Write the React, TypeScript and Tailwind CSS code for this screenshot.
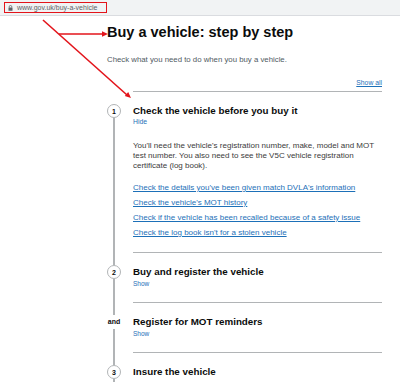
import React from "react";

const Circle = ({ n }: { n: string }) => (
  <div className="w-[14px] h-[14px] shrink-0 rounded-full border-[1.5px] border-[#b1b4b6] bg-white flex items-center justify-center text-[7px] font-bold leading-none text-[#0b0c0c]">
    {n}
  </div>
);

const VLine = ({ className = "" }: { className?: string }) => (
  <div className={`w-[1.5px] bg-[#b1b4b6] ${className}`} />
);

export default function App() {
  const links = [
    "Check the details you've been given match DVLA's information",
    "Check the vehicle's MOT history",
    "Check if the vehicle has been recalled because of a safety issue",
    "Check the log book isn't for a stolen vehicle",
  ];
  return (
    <div className="relative w-[400px] h-[382px] overflow-hidden bg-white font-['Liberation_Sans',Arial,sans-serif] text-[#0b0c0c]">
      {/* browser bar */}
      <div className="h-[16px] bg-[#f1f3f4] border-b border-[#dadce0] flex items-center pl-[4px]">
        <div className="h-[11px] w-[103px] border-[1.5px] border-[#e3141b] flex items-center pl-[3px] gap-[4px]">
          <svg width="5" height="6" viewBox="0 0 5 6" className="shrink-0">
            <path d="M1.2 2.6V1.8a1.3 1.3 0 0 1 2.6 0v0.8" fill="none" stroke="#5f6368" strokeWidth="0.8" />
            <rect x="0.5" y="2.6" width="4" height="3.2" rx="0.4" fill="#5f6368" />
          </svg>
          <span className="text-[7px] leading-none text-[#5f6368]">www.gov.uk/buy-a-vehicle</span>
        </div>
      </div>

      <div className="pl-[107px] pr-[18px]">
        <h1 className="mt-[8px] text-[14.5px] leading-[16px] font-bold">
          Buy a vehicle: step by step
        </h1>
        <p className="mt-[15px] text-[7.8px] leading-[10px] text-[#505a5f]">
          Check what you need to do when you buy a vehicle.
        </p>
        <div className="mt-[13px] flex">
          <div className="w-[26px] shrink-0" />
          <div className="flex-1 flex justify-end border-b border-[#b1b4b6] pb-[3px]">
            <a className="text-[6.8px] leading-[10px] text-[#1d70b8] underline underline-offset-1">Show all</a>
          </div>
        </div>

        {/* Step 1 */}
        <div className="flex">
          <div className="w-[26px] shrink-0 flex flex-col items-start">
            <div className="h-[12px]" />
            <Circle n="1" />
            <VLine className="flex-1 ml-[6.25px]" />
          </div>
          <div className="flex-1 border-b border-[#b1b4b6] pt-[12px] pb-[14px]">
            <h2 className="text-[9.8px] leading-[14px] font-bold">Check the vehicle before you buy it</h2>
            <div className="text-[6.8px] leading-[8px] text-[#1d70b8]">Hide</div>
            <p className="mt-[15px] text-[8px] leading-[10px] text-[#3b3b3b] whitespace-nowrap">
              You'll need the vehicle's registration number, make, model and MOT
              <br />
              test number. You also need to see the V5C vehicle registration
              <br />
              certificate (log book).
            </p>
            <ul className="mt-[12px] flex flex-col gap-[5px]">
              {links.map((l) => (
                <li key={l} className="text-[8px] leading-[10px] whitespace-nowrap">
                  <a className="text-[#1d70b8] underline underline-offset-1">{l}</a>
                </li>
              ))}
            </ul>
          </div>
        </div>

        {/* Step 2 */}
        <div className="flex">
          <div className="w-[26px] shrink-0 flex flex-col items-start">
            <VLine className="h-[12px] ml-[6.25px]" />
            <Circle n="2" />
            <VLine className="flex-1 ml-[6.25px]" />
          </div>
          <div className="flex-1 border-b border-[#b1b4b6] pt-[12px] pb-[14px]">
            <h2 className="text-[9.8px] leading-[14px] font-bold">Buy and register the vehicle</h2>
            <div className="mt-[1px] text-[6.5px] leading-[8px] text-[#1d70b8]">Show</div>
          </div>
        </div>

        {/* and */}
        <div className="flex">
          <div className="w-[26px] shrink-0 flex flex-col items-start">
            <VLine className="h-[12px] ml-[6.25px]" />
            <div className="w-[14px] my-[2px] text-center text-[7px] leading-[10px] font-bold">and</div>
            <VLine className="flex-1 ml-[6.25px]" />
          </div>
          <div className="flex-1 border-b border-[#b1b4b6] pt-[12px] pb-[14px]">
            <h2 className="text-[9.8px] leading-[14px] font-bold">Register for MOT reminders</h2>
            <div className="mt-[1px] text-[6.5px] leading-[8px] text-[#1d70b8]">Show</div>
          </div>
        </div>

        {/* Step 3 */}
        <div className="flex">
          <div className="w-[26px] shrink-0 flex flex-col items-start">
            <VLine className="h-[12px] ml-[6.25px]" />
            <Circle n="3" />
            <VLine className="flex-1 ml-[6.25px]" />
          </div>
          <div className="flex-1 pt-[12px] pb-[14px]">
            <h2 className="text-[9.8px] leading-[14px] font-bold">Insure the vehicle</h2>
          </div>
        </div>
      </div>

      {/* annotation arrows */}
      <svg className="absolute left-0 top-0 pointer-events-none" width="400" height="382" viewBox="0 0 400 382">
        <line x1="43" y1="20" x2="127" y2="95" stroke="#e3141b" strokeWidth="1.6" />
        <polygon points="131,98 124.8,95.9 128.2,92.1" fill="#e3141b" />
        <line x1="59" y1="34" x2="103" y2="34" stroke="#e3141b" strokeWidth="1.6" />
        <polygon points="108,34 102,31.3 102,36.7" fill="#e3141b" />
      </svg>
    </div>
  );
}
